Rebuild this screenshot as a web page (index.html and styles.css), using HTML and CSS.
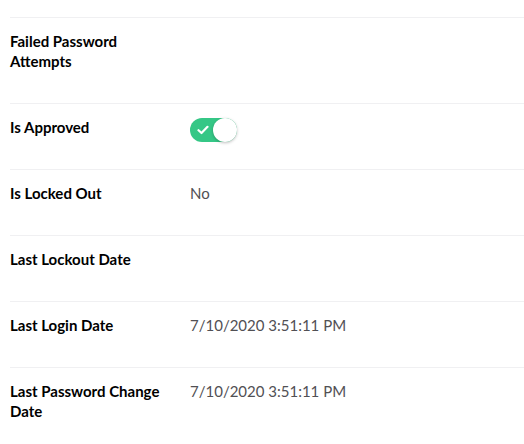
FILE: index.html
```html
<!DOCTYPE html>
<html>
<head>
<meta charset="utf-8">
<link rel="stylesheet" href="styles.css">
</head>
<body>
<div class="panel">
  <div class="top-space"></div>
  <div class="row">
    <div class="label">Failed Password Attempts</div>
    <div class="value"></div>
  </div>
  <div class="row">
    <div class="label">Is Approved</div>
    <div class="value">
      <span class="toggle">
        <svg class="check" width="12" height="10" viewBox="0 0 12 10"><path d="M1.5 5.2 L4.5 8 L10.5 1.8" fill="none" stroke="#fff" stroke-width="2.2" stroke-linecap="round" stroke-linejoin="round"/></svg>
        <span class="knob"></span>
      </span>
    </div>
  </div>
  <div class="row">
    <div class="label">Is Locked Out</div>
    <div class="value">No</div>
  </div>
  <div class="row">
    <div class="label">Last Lockout Date</div>
    <div class="value"></div>
  </div>
  <div class="row">
    <div class="label">Last Login Date</div>
    <div class="value">7/10/2020 3:51:11 PM</div>
  </div>
  <div class="row">
    <div class="label">Last Password Change Date</div>
    <div class="value">7/10/2020 3:51:11 PM</div>
  </div>
</div>
</body>
</html>
```
FILE: styles.css
```css
html, body {
  margin: 0;
  padding: 0;
  background: #fff;
}
body {
  font-family: Lato, "Open Sans", sans-serif;
  font-size: 15px;
  line-height: 20px;
  color: #000;
}
.panel {
  padding-left: 10px;
}
.top-space {
  height: 17px;
}
.row {
  display: flex;
  border-top: 1px solid #f0f0f2;
  padding: 13px 0 32px;
}
.label {
  width: 160px;
  padding-right: 20px;
  font-weight: 700;
  color: #000;
}
.value {
  flex: 1;
  color: #515054;
  min-height: 20px;
}
.toggle {
  position: relative;
  display: inline-flex;
  align-items: center;
  width: 47px;
  height: 24px;
  border-radius: 12px;
  background: #35c786;
  vertical-align: top;
  margin: 1px 0 -5px;
}
.check {
  margin-left: 7px;
}
.knob {
  position: absolute;
  right: 0;
  top: 0;
  width: 24px;
  height: 24px;
  border-radius: 50%;
  background: #fff;
  box-shadow: 0 1px 3px rgba(0,0,0,0.25);
}
```
